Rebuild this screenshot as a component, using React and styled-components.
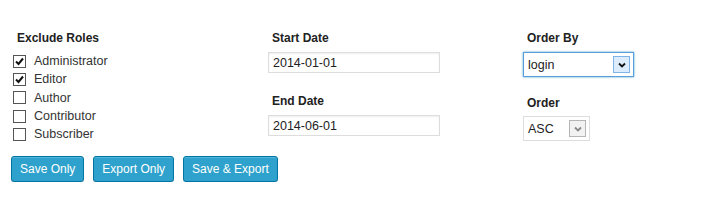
import React from "react";
import styled, { createGlobalStyle } from "styled-components";

const GlobalStyle = createGlobalStyle`
  body {
    margin: 0;
    background: #fff;
    font-family: "Liberation Sans", Arial, sans-serif;
    font-size: 12.5px;
    color: #333;
  }
`;

const roles = [
  { name: "Administrator", checked: true },
  { name: "Editor", checked: true },
  { name: "Author", checked: false },
  { name: "Contributor", checked: false },
  { name: "Subscriber", checked: false },
];

const Page = styled.div`
  padding: 30px 11px 0;
  width: 711px;
  box-sizing: border-box;
`;

const Columns = styled.div`
  display: grid;
  grid-template-columns: 257px 255px 150px;
`;

const Field = styled.div`
  display: flex;
  flex-direction: column;
  margin-bottom: ${(p) => p.gap || 0}px;
`;

const Label = styled.label`
  font-weight: bold;
  font-size: 12px;
  color: #222;
  line-height: 16px;
  padding-left: ${(p) => p.indent || 4}px;
  margin-bottom: ${(p) => p.below || 6}px;
`;

const RoleList = styled.ul`
  list-style: none;
  margin: 0;
  padding: 0;
`;

const RoleRow = styled.li`
  display: flex;
  align-items: center;
  gap: 8px;
  height: 18.3px;
  color: #333;
`;

const Box = styled.span`
  width: 11px;
  height: 11px;
  border: 1px solid #555;
  background: #fff;
  display: inline-flex;
  align-items: center;
  justify-content: center;
  margin-left: 2px;
`;

const TextInput = styled.input`
  width: 172px;
  height: 21px;
  box-sizing: border-box;
  border: 1px solid #ddd;
  box-shadow: inset 0 1px 2px rgba(0, 0, 0, 0.07);
  font-family: "Liberation Sans", Arial, sans-serif;
  font-size: 12.5px;
  color: #222;
  padding: 0 4px;
  outline: none;
`;

const SelectWrap = styled.div`
  position: relative;
  width: ${(p) => p.w}px;
  height: 25px;
  box-sizing: border-box;
  border: 1px solid ${(p) => (p.focused ? "#5b9dd9" : "#ddd")};
  box-shadow: ${(p) => (p.focused ? "0 0 2px rgba(30,140,190,.8)" : "none")};
  background: #fff;
  display: flex;
  align-items: center;
  padding-left: 4px;
  font-size: 12.5px;
  color: #222;
`;

const Arrow = styled.span`
  position: absolute;
  right: 3px;
  top: 3px;
  width: 17px;
  height: 17px;
  box-sizing: border-box;
  border: 1px solid ${(p) => (p.focused ? "#7eb4ea" : "#b5b5b5")};
  background: ${(p) => (p.focused ? "#dcecfc" : "#f2f2f2")};
  display: flex;
  align-items: center;
  justify-content: center;
`;

const Buttons = styled.div`
  display: flex;
  gap: 9px;
  margin-top: 13px;
`;

const Button = styled.button`
  height: 26px;
  padding: 0 8px;
  border: 1px solid #0074a2;
  border-radius: 3px;
  background: #2ea2cc;
  color: #fff;
  font-family: "Liberation Sans", Arial, sans-serif;
  font-size: 12px;
  box-shadow: inset 0 1px 0 rgba(120, 200, 230, 0.5), 0 1px 0 rgba(0, 0, 0, 0.15);
  cursor: pointer;
`;

const Check = () => (
  <svg width="9" height="9" viewBox="0 0 9 9">
    <path d="M1 4.5 L3.5 7 L8 1.5" stroke="#111" strokeWidth="2" fill="none" />
  </svg>
);

const Chevron = ({ color }) => (
  <svg width="8" height="6" viewBox="0 0 8 6">
    <path d="M1 1.5 L4 4.5 L7 1.5" stroke={color} strokeWidth="1.8" fill="none" />
  </svg>
);

const Select = ({ value, w, focused }) => (
  <SelectWrap w={w} focused={focused}>
    {value}
    <Arrow focused={focused}>
      <Chevron color={focused ? "#111" : "#888"} />
    </Arrow>
  </SelectWrap>
);

export default function App() {
  return (
    <>
      <GlobalStyle />
      <Page>
        <Columns>
          <Field>
            <Label indent={6} below={6}>Exclude Roles</Label>
            <RoleList>
              {roles.map((r) => (
                <RoleRow key={r.name}>
                  <Box>{r.checked && <Check />}</Box>
                  {r.name}
                </RoleRow>
              ))}
            </RoleList>
          </Field>
          <div>
            <Field gap={20}>
              <Label below={6}>Start Date</Label>
              <TextInput defaultValue="2014-01-01" />
            </Field>
            <Field>
              <Label below={6}>End Date</Label>
              <TextInput defaultValue="2014-06-01" />
            </Field>
          </div>
          <div>
            <Field gap={18}>
              <Label below={6}>Order By</Label>
              <Select value="login" w={111} focused />
            </Field>
            <Field>
              <Label below={5}>Order</Label>
              <Select value="ASC" w={67} />
            </Field>
          </div>
        </Columns>
        <Buttons>
          <Button>Save Only</Button>
          <Button>Export Only</Button>
          <Button>Save &amp; Export</Button>
        </Buttons>
      </Page>
    </>
  );
}
